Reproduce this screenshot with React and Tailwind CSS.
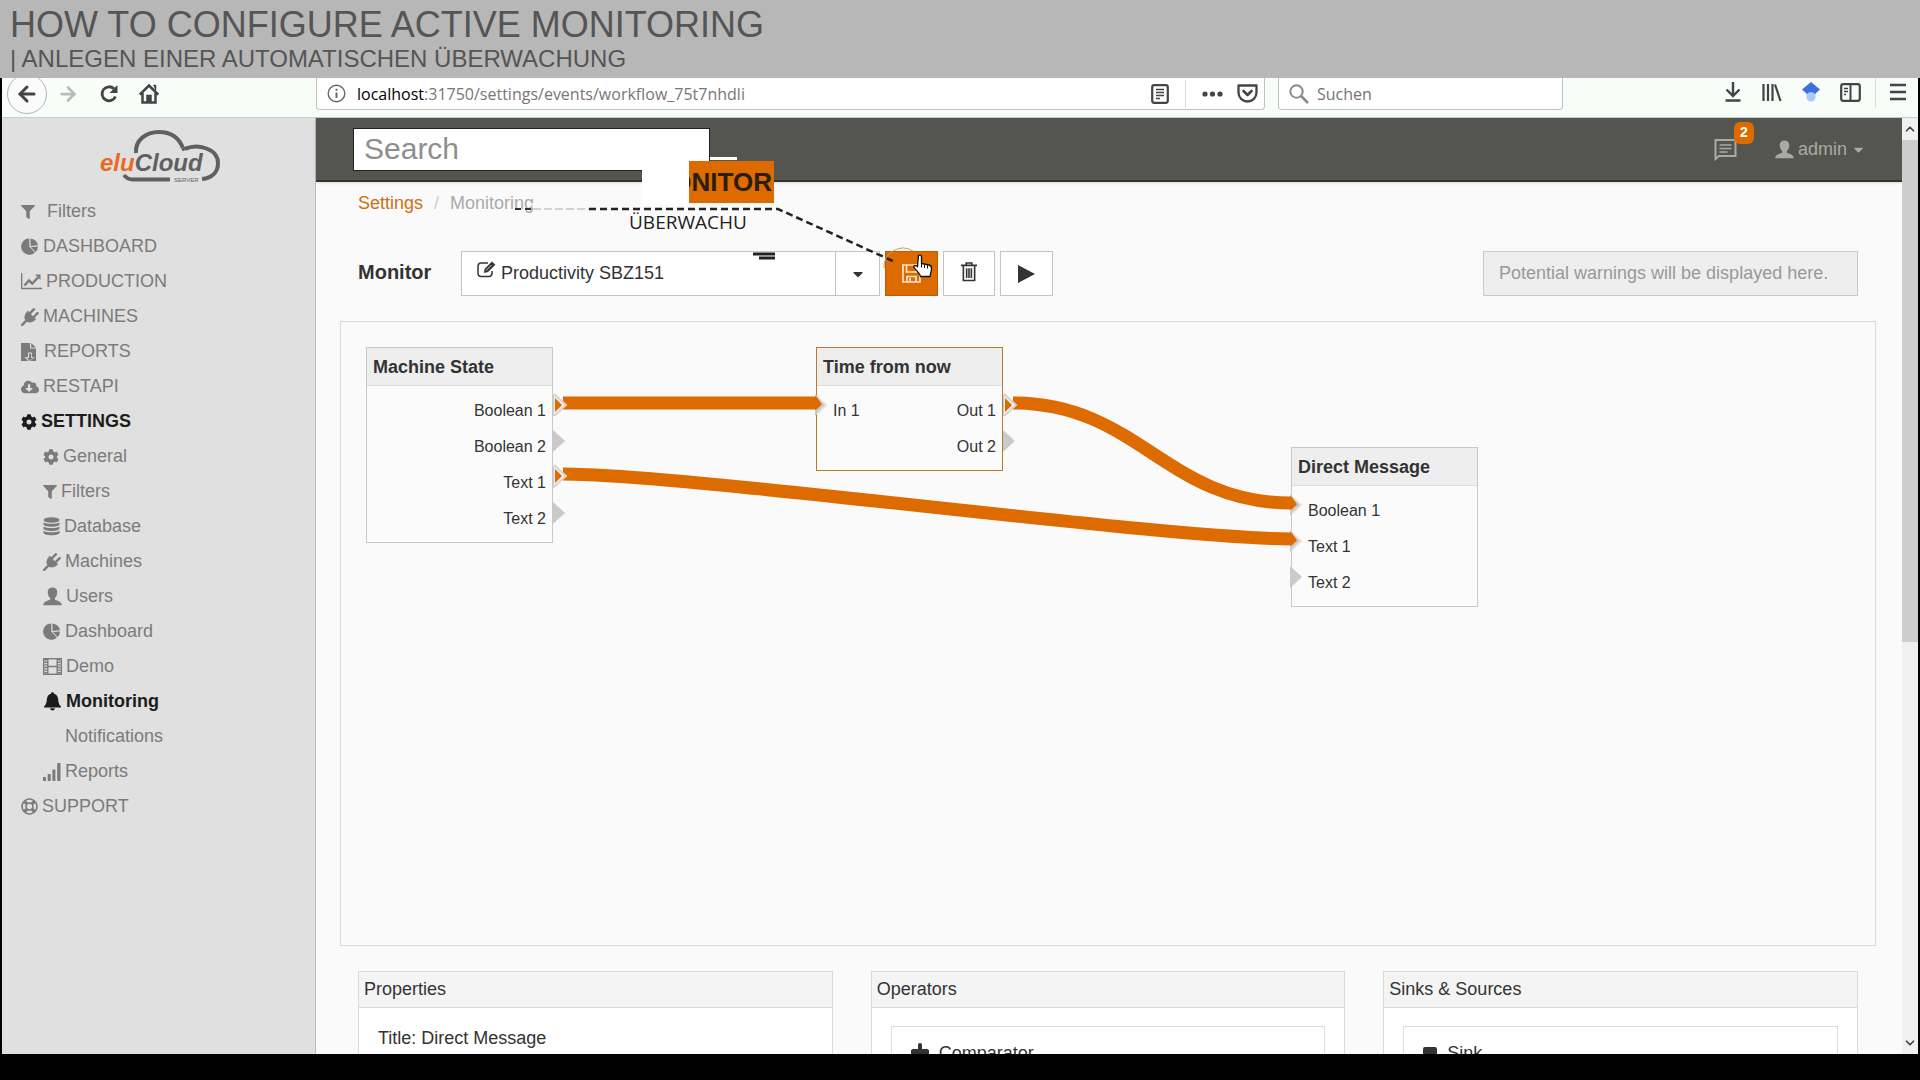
import React from 'react';
import { FaFilter, FaCog, FaRegLifeRing, FaCloudDownloadAlt, FaCaretDown, FaPlay } from 'react-icons/fa';
import { ArrowLeft, ArrowRight, ChevronDown, ChevronUp } from 'lucide-react';

const PieIcon = () => (
  <svg width="18" height="17" viewBox="0 0 18 17" fill="currentColor">
    <path d="M8.3.4v8.2l5.6 6A8.2 8.2 0 1 1 8.3.4z" />
    <path d="M9.5.4a8 8 0 0 1 7.4 6.9L9.5 8zM9.9 9l7.1-.6a7.6 7.6 0 0 1-2.5 5.5z" />
  </svg>
);

const ChartIcon = () => (
  <svg width="21" height="17" viewBox="0 0 21 17" fill="none" stroke="currentColor">
    <path d="M.7 0v15.5H21" strokeWidth="1.3" />
    <path d="M3.5 12.5l4.5-5 3.3 3L17 4.5" strokeWidth="2.4" />
    <path d="M14 1.5h5.5V7z" fill="currentColor" stroke="none" />
  </svg>
);

const PlugIcon = () => (
  <svg width="18" height="18" viewBox="0 0 19 19" fill="none" stroke="currentColor" strokeLinecap="round">
    <path d="M1.2 17.800l5-5M9.500 5.500l4-4M13.500 9.500l4-4" strokeWidth="2.600" />
    <path d="M7.200 3.600l8.200 8.200c-2.700 3-7 4-9.800 1.600C3 11 4 6.500 7.200 3.600z" fill="currentColor" strokeWidth="1" />
  </svg>
);

const ReportIcon = () => (
  <svg width="15" height="18" viewBox="0 0 15 18" fill="currentColor">
    <path d="M0 0h9v5.500h6V18H9.500l4-3.800h-2.700V9.500H7v4.700H3.500L7.500 18H0zM10.200 0L15 4.500h-4.800z" />
    <path d="M8 10.500h2v4.500h2L9 18l-3-3h2z" />
  </svg>
);

const DatabaseIcon = () => (
  <svg width="17" height="19" viewBox="0 0 17 19" fill="currentColor">
    <ellipse cx="8.5" cy="3" rx="8" ry="2.8" />
    <path d="M.5 5.200c3 2 13 2 16 0v2.200c-1 3-15 3-16 0zM.5 9.500c3 2 13 2 16 0v2.200c-1 3-15 3-16 0zM.5 13.800c3 2 13 2 16 0V16c-1 3-15 3-16 0z" />
  </svg>
);

const UserIcon = () => (
  <svg width="19" height="19" viewBox="0 0 19 19" fill="currentColor">
    <path d="M9.500.5c3 0 4.800 1.800 4.800 4.500 0 2.600-1 4.700-2.500 6v1.500c2.500 1.300 7 2.200 7 5.700H.2c0-3.500 4.500-4.400 7-5.700V11C5.700 9.700 4.700 7.600 4.700 5 4.700 2.300 6.500.5 9.500.5z" />
  </svg>
);

const FilmIcon = () => (
  <svg width="19" height="17" viewBox="0 0 19 17" fill="none" stroke="currentColor">
    <rect x=".7" y=".7" width="17.6" height="15.6" strokeWidth="1.4" />
    <path d="M4.800 1v15M14.200 1v15M5 8.500h9" strokeWidth="1.4" />
    <path d="M2.700 1v15M16.300 1v15" strokeWidth="2.6" strokeDasharray="1.4 1.2" />
  </svg>
);

const BellIcon = () => (
  <svg width="19" height="19" viewBox="0 0 19 19" fill="currentColor">
    <path d="M9.500.3c1 0 1.500.7 1.500 1.500 3 .8 4 3 4.200 6 .2 3.300 1 5 2.800 6.700v1H1v-1c1.800-1.700 2.600-3.400 2.800-6.700.2-3 1.200-5.200 4.200-6 0-.8.500-1.500 1.500-1.500zM7.200 16.200h4.600c0 3-4.600 3-4.600 0z" />
  </svg>
);

const SignalIcon = () => (
  <svg width="18" height="18" viewBox="0 0 18 18" fill="currentColor">
    <path d="M0 14h3v4H0zM4.700 11h3v7h-3zM9.400 6.500h3V18h-3zM14.200 0h3.300v18h-3.300z" />
  </svg>
);

const CogIcon = () => <FaCog size={16} />;
const FilterIcon = () => <FaFilter size={14} />;
const CloudIcon = () => <FaCloudDownloadAlt size={18} />;

const RingIcon = () => <FaRegLifeRing size={17} />;

const NAV = [
  { label: 'Filters', icon: FilterIcon, gap: 'gap-3' },
  { label: 'DASHBOARD', icon: PieIcon },
  { label: 'PRODUCTION', icon: ChartIcon },
  { label: 'MACHINES', icon: PlugIcon },
  { label: 'REPORTS', icon: ReportIcon, gap: 'gap-2' },
  { label: 'RESTAPI', icon: CloudIcon },
  { label: 'SETTINGS', icon: CogIcon, active: true },
  { label: 'General', icon: CogIcon, sub: true },
  { label: 'Filters', icon: FilterIcon, sub: true },
  { label: 'Database', icon: DatabaseIcon, sub: true },
  { label: 'Machines', icon: PlugIcon, sub: true },
  { label: 'Users', icon: UserIcon, sub: true },
  { label: 'Dashboard', icon: PieIcon, sub: true },
  { label: 'Demo', icon: FilmIcon, sub: true },
  { label: 'Monitoring', icon: BellIcon, sub: true, active: true },
  { label: 'Notifications', sub: true },
  { label: 'Reports', icon: SignalIcon, sub: true },
  { label: 'SUPPORT', icon: RingIcon },
];

const NavItem = ({ label, icon: Icon, sub, active, gap = 'gap-1' }) => (
  <li>
    <a
      href="#"
      className={`flex h-[35px] items-center ${gap} ${sub ? 'pl-[41px]' : 'pl-[19px]'} ${
        active ? 'font-bold text-[#1c1c1c]' : 'text-[#7b7b7b]'
      }`}
    >
      {Icon ? <Icon /> : <span className="w-[18px]" />}
      {label}
    </a>
  </li>
);

const Logo = () => (
  <svg width="124" height="64" viewBox="0 0 124 64" fill="none" role="img" aria-label="eluCloud Server">
    <path d="M36 31C35 18 46 10 59 10c12 0 20 6 24 16M85 27c13-6 33 0 33 14 0 9-6 15-16 16" stroke="#606060" strokeWidth="4" />
    <path d="M82 28l6-3" stroke="#606060" strokeWidth="3" />
    <path d="M24 53c2 3 5 4.500 9 4.500h37" stroke="#606060" strokeWidth="4" />
    <text x="0" y="49" fontFamily="Liberation Sans, sans-serif" fontSize="24" fontWeight="bold" fontStyle="italic" fill="#606060">
      <tspan fill="#ea6a24">elu</tspan>Cloud
    </text>
    <text x="74" y="60" fontFamily="Liberation Sans, sans-serif" fontSize="6" fill="#606060">SERVER</text>
  </svg>
);

const BrowserBar = () => (
  <div className="flex h-10 shrink-0 items-start border-b border-[#c9cec9] bg-[#f7fdf8] font-['Open_Sans','Noto_Sans',sans-serif] text-[#444]">
    <div className="flex h-full w-[314px] items-start gap-5">
      <button aria-label="Back" className="ml-[5px] -mt-1 flex size-10 shrink-0 items-center justify-center rounded-full border border-[#b5b5b5] bg-[#fbfbfb]">
        <ArrowLeft size={24} strokeWidth={3} />
      </button>
      <div className="-ml-2.5 flex h-8 items-center gap-5">
        <button aria-label="Forward" className="text-[#b9bdb9]"><ArrowRight size={22} strokeWidth={3} /></button>
        <button aria-label="Reload">
          <svg width="20" height="20" viewBox="0 0 20 20" fill="none" stroke="currentColor" strokeWidth="2.8">
            <path d="M16.500 12.500A7 7 0 1 1 15 4.800" />
            <path d="M18.500 1v8h-8z" fill="currentColor" stroke="none" />
          </svg>
        </button>
        <button aria-label="Home">
          <svg width="20" height="20" viewBox="0 0 20 20" fill="none" stroke="currentColor" strokeWidth="2.5">
            <path d="M.8 10.500L10 1.500l9.200 9M3.500 9v9.500h13V9" />
            <path d="M8 18v-6.500h4V18zM14.500 1.500h2V6" fill="currentColor" strokeWidth="1.5" />
          </svg>
        </button>
      </div>
    </div>
    <div className="flex h-8 min-w-0 flex-1 items-center rounded-b-sm border-x border-b border-[#bfc3bf] bg-white px-2.5">
      <svg width="19" height="19" viewBox="0 0 19 19" className="shrink-0" fill="none" stroke="#666">
        <circle cx="9.5" cy="9.5" r="8.3" strokeWidth="1.4" />
        <path d="M9.500 8.500v5.500M9.500 4.800v2" strokeWidth="2" />
      </svg>
      <p className="ml-[11px] flex-1 text-[16px] text-[#777]"><span className="text-black">localhost</span>:31750/settings/events/workflow_75t7nhdli</p>
      <button aria-label="Reader view">
        <svg width="18" height="20" viewBox="0 0 18 20" fill="none" stroke="currentColor">
          <rect x="1.2" y="1.2" width="15.6" height="17.6" rx="2" strokeWidth="2.2" />
          <path d="M5 5.500h8M5 8.500h8M5 11.500h8M5 14.500h4" strokeWidth="1.5" />
        </svg>
      </button>
      <span className="ml-4 h-7 border-l border-[#dadada]" />
      <button aria-label="Page actions" className="ml-4">
        <svg width="21" height="6" viewBox="0 0 21 6" fill="currentColor"><circle cx="3" cy="3" r="2.6" /><circle cx="10.5" cy="3" r="2.6" /><circle cx="18" cy="3" r="2.6" /></svg>
      </button>
      <button aria-label="Save to Pocket" className="ml-3.5 -mr-1">
        <svg width="21" height="19" viewBox="0 0 21 19" fill="none" stroke="currentColor" strokeWidth="2.3" strokeLinecap="round" strokeLinejoin="round">
          <path d="M1.500 1.500h18v7a9 9 0 0 1-18 0z" />
          <path d="M6.500 7l4 4 4-4" strokeWidth="2.6" />
        </svg>
      </button>
    </div>
    <label className="ml-[13px] flex h-8 w-[285px] items-center rounded-b-sm border-x border-b border-[#bfc3bf] bg-white px-2.5">
      <svg width="20" height="20" viewBox="0 0 20 20" fill="none" stroke="#8a8a8a"><circle cx="7.5" cy="7.5" r="6.2" strokeWidth="2" /><path d="M12 12l7 7" strokeWidth="2.6" /></svg>
      <input type="text" placeholder="Suchen" aria-label="Suchen" className="ml-2 min-w-0 flex-1 bg-transparent text-[16px] outline-none placeholder:text-[#737373]" />
    </label>
    <div className="flex h-7 w-[355px] items-center justify-end gap-5 pr-3">
      <button aria-label="Downloads">
        <svg width="18" height="20" viewBox="0 0 18 20" fill="none" stroke="currentColor" strokeWidth="2.4"><path d="M9 0v13M2.500 7.500L9 14l6.500-6.500M1.500 18.500h15" /></svg>
      </button>
      <button aria-label="Library">
        <svg width="20" height="19" viewBox="0 0 20 19" fill="none" stroke="currentColor" strokeWidth="2.2"><path d="M1.500 1v17M6 1v17M10.500 1v17M13 1.500L18.500 18" /></svg>
      </button>
      <button aria-label="Scholar">
        <svg width="18" height="20" viewBox="0 0 18 20"><path d="M4.500 9h9v6a4.500 4.500 0 0 1-9 0z" fill="#a9cbfa" /><path d="M9 0l9 7.500-5 4.500a5 5 0 0 0-8 0L0 7.500z" fill="#3b71d8" /></svg>
      </button>
      <button aria-label="Sidebars">
        <svg width="21" height="19" viewBox="0 0 21 19" fill="none" stroke="currentColor"><rect x="1.2" y="1.2" width="18.6" height="16.6" rx="2" strokeWidth="2.2" /><path d="M10.500 1v17" strokeWidth="2" /><path d="M4 5.500h4M4 8.500h4M4 11.500h2" strokeWidth="1.3" /></svg>
      </button>
      <span className="-mx-1.5 h-8 border-l border-[#dadfda]" />
      <button aria-label="Menu">
        <svg width="16" height="18" viewBox="0 0 16 18" stroke="currentColor" strokeWidth="2.4"><path d="M0 2h16M0 9h16M0 16h16" /></svg>
      </button>
    </div>
  </div>
);

const PageHeader = () => (
  <header className="flex h-16 shrink-0 items-center border-b-2 border-[#333330] bg-[#555550] pl-[37px] pr-[36px] text-[#a9a9a5] shadow">
    <input
      type="text"
      placeholder="Search"
      aria-label="Search"
      className="h-[43px] w-[357px] border border-[#222] bg-white px-2.5 text-[30px] leading-10 outline-none placeholder:text-[#8e8e8e]"
    />
    <button aria-label="Messages" className="relative ml-auto mr-[38px]">
      <svg width="23" height="23" viewBox="0 0 23 23" fill="none" stroke="currentColor" strokeWidth="2">
        <path d="M1.500 21V2h20v16H5z" />
        <path d="M5.500 7h12M5.500 10.500h12M5.500 14h8" strokeWidth="1.6" />
      </svg>
      <span className="absolute -top-4 left-5 flex h-[22px] w-5 items-center justify-center rounded-md bg-[#dd6b00] text-[14px] font-bold text-white">2</span>
    </button>
    <button className="flex items-center gap-1 text-[18px]">
      <UserIcon />
      admin
      <FaCaretDown size={15} />
    </button>
  </header>
);

const Toolbar = () => (
  <div className="flex h-[45px] items-stretch text-[18px] text-[#333]">
    <label htmlFor="monitor" className="w-[103px] text-[20px] font-bold leading-[43px]">Monitor</label>
    <div className="flex w-[375px] items-center border border-[#c4c4c4] bg-white pl-[15px]">
      <svg width="19" height="17" viewBox="0 0 19 17" className="-mt-2 shrink-0" fill="none" stroke="#333">
        <path d="M11 2H4a3 3 0 0 0-3 3v7.500a3 3 0 0 0 3 3h8a3 3 0 0 0 3-3V10" strokeWidth="1.5" />
        <path d="M7.200 11.500l.8-3.800L15 .8l3 3-7 7z" fill="#333" strokeWidth=".6" />
        <path d="M9 9.500l5.500-5.500" stroke="#fff" strokeWidth=".8" />
      </svg>
      <input id="monitor" type="text" defaultValue="Productivity SBZ151" className="ml-[5px] min-w-0 flex-1 bg-transparent outline-none" />
    </div>
    <button aria-label="Choose monitor" className="-ml-px flex w-[45px] items-center justify-center border border-[#c4c4c4] bg-white">
      <FaCaretDown size={16} />
    </button>
    <button aria-label="Save" className="ml-[5px] flex w-[53px] items-center justify-center border border-[#b85c08] bg-[#dd6b00] text-white">
      <svg width="19" height="19" viewBox="0 0 19 19" fill="none" stroke="#ffe9d0" strokeWidth="1.6">
        <path d="M1 1h14l3 3v14H1z" />
        <path d="M4.500 1v7h10V1M5 18v-5.500h9V18M8 14v3" />
      </svg>
    </button>
    <button aria-label="Delete" className="ml-[5px] flex w-[52px] items-center justify-center border border-[#c4c4c4] bg-white pb-1">
      <svg width="16" height="20" viewBox="0 0 17 21" fill="none" stroke="#333" strokeWidth="1.7">
        <path d="M0 3.500h17M5.500 3V1h6v2M2.500 4v15.500h12V4M6 6.500V17M8.500 6.500V17M11 6.500V17" />
      </svg>
    </button>
    <button aria-label="Run" className="ml-[5px] flex w-[53px] items-center justify-center border border-[#c4c4c4] bg-white">
      <svg width="17" height="18" viewBox="0 0 17 18" fill="currentColor"><path d="M0 0l17 9-17 9z" /></svg>
    </button>
    <p className="ml-auto w-[375px] border border-[#c9c9c9] bg-[#eee] px-[15px] leading-[42px] text-[#999]">
      Potential warnings will be displayed here.
    </p>
  </div>
);

/* Positions are relative to the canvas */
const NODES = [
  { title: 'Machine State', place: 'left-[25px] top-[25px]', outputs: [['Boolean 1', true], ['Boolean 2'], ['Text 1', true], ['Text 2']] },
  { title: 'Time from now', place: 'left-[475px] top-[25px]', selected: true, inputs: [['In 1', true]], outputs: [['Out 1', true], ['Out 2']] },
  { title: 'Direct Message', place: 'left-[950px] top-[125px]', inputs: [['Boolean 1', true], ['Text 1', true], ['Text 2']] },
];

const LINKS = [
  { x1: 222, y1: 81, x2: 475, y2: 81 },
  { x1: 672, y1: 81, x2: 950, y2: 181 },
  { x1: 222, y1: 152, x2: 950, y2: 217 },
];

const Arrow = ({ side }) => (
  <svg
    width="12"
    height="24"
    viewBox="0 0 12 24"
    className={`absolute top-0 ${side === 'out' ? '-right-[13px]' : '-left-0.5'}`}
  >
    <path d="M0 1l12 11L0 23z" fill="#cacaca" />
  </svg>
);

const Link = ({ x1, y1, x2, y2 }) => (
  <g>
    <path d={`M${x1} ${y1}C${x1 + 125} ${y1} ${x2 - 125} ${y2} ${x2} ${y2}`} stroke="#dd6b00" strokeWidth="13" />
    <g transform={`translate(${x1} ${y1})`}>
      <path d="M-9 -9L3 2-9 13z" fill="#f5f1ea" />
      <path d="M-9 -9L3 2-9 13" stroke="#d6d4d1" strokeWidth="2" />
      <path d="M-8 -5l7 7-7 7z" fill="#dd6b00" />
    </g>
    <g transform={`translate(${x2} ${y2})`}>
      <path d="M1 -7l9 9-9 9" stroke="#ece6de" strokeWidth="1.5" />
      <path d="M-1 -6.500h1.500l5.500 8-5.500 5h-1.500z" fill="#dd6b00" />
    </g>
  </g>
);

const Node = ({ title, place, selected, inputs = [], outputs = [] }) => (
  <div className={`absolute w-[187px] border bg-[#fbfbfb] ${place} ${selected ? 'border-[#b97a2e]' : 'border-[#c8c8c8]'}`}>
    <h3 className="border-b border-[#ddd] bg-[#eee] pl-1.5 pt-px text-[18px] font-bold leading-9 text-[#333]">{title}</h3>
    <div className="flex justify-between pb-[5px] pt-[7px] text-[16px] leading-9 text-[#333]">
      <ul>
        {inputs.map(([label]) => (
          <li key={label} className="relative pl-4">
            <Arrow side="in" />
            {label}
          </li>
        ))}
      </ul>
      <ul className="text-right">
        {outputs.map(([label]) => (
          <li key={label} className="relative pr-1.5">
            <Arrow side="out" />
            {label}
          </li>
        ))}
      </ul>
    </div>
  </div>
);

const Canvas = () => (
  <section aria-label="Workflow" className="relative h-[625px] border border-[#d9d9d9] bg-[#fafafa]">
    {NODES.map((node) => <Node key={node.title} {...node} />)}
    <svg className="pointer-events-none absolute inset-0 size-full" fill="none">
      {LINKS.map((link) => <Link key={`${link.x1}-${link.y1}`} {...link} />)}
    </svg>
  </section>
);

const Panel = ({ title, children }) => (
  <section className="border border-[#d9d9d9] bg-white text-[18px] text-[#333]">
    <h2 className="border-b border-[#d9d9d9] bg-[#f4f4f4] pl-[5px] leading-[35px]">{title}</h2>
    <div className="h-24 px-[19px] py-[18px]">{children}</div>
  </section>
);

const PanelItem = ({ icon, children }) => (
  <div className="flex h-[54px] items-center gap-2.5 border border-[#ddd] pl-[19px]">
    {icon}
    {children}
  </div>
);

const Callout = () => (
  <div className="pointer-events-none absolute left-[515px] top-[157px] h-36 w-[440px]" aria-hidden="true">
    <svg className="absolute inset-0" width="440" height="144" fill="none">
      <path d="M195 1.500h27" stroke="#fff" strokeWidth="3" />
      <path d="M14 46h62v5H18z" fill="#fafafa" fillOpacity=".8" />
      <path d="M0 52h16" stroke="#333" strokeWidth="2" strokeDasharray="6 4" />
      <path d="M18 52h56" stroke="#aaa" strokeDasharray="8 3" />
      <path d="M74 52h189l117 53" stroke="#222" strokeWidth="2.500" strokeDasharray="7 4" />
    </svg>
    <div className="absolute left-[127px] top-1 h-11 w-12 bg-white" />
    <div className="absolute left-[174px] top-1 flex h-[42px] w-[85px] items-center justify-end overflow-hidden bg-[#dd6b00] pr-0.5 text-[26px] font-bold text-[#2a1d12]">
      ONITOR
    </div>
    <p className="absolute left-[114px] top-[53px] font-['Open_Sans','Noto_Sans',sans-serif] text-[19px] leading-6 text-[#222]">ÜBERWACHU</p>
    <svg className="absolute left-[238px] top-[95px]" width="23" height="8"><path d="M0 2h22M6 6h16" stroke="#222" strokeWidth="3" /></svg>
  </div>
);

const Pointer = () => (
  <svg className="pointer-events-none absolute left-[913px] top-[254px]" width="20" height="24" viewBox="0 0 20 24" aria-hidden="true">
    <path d="M5.500 1.500c1.800-1 3 0 3 1.500v6.500l7.500 1.500c2 .4 2.500 1.500 2.500 3.500 0 3-1 4-1.500 8H7.500C7 19 3 16.500 1 13.500c-.6-1.700 1-2.700 3.500-1z" fill="#fff" stroke="#111" strokeWidth="1.3" />
    <path d="M8.500 9.500v4M11.500 10.500v3.500M14.500 11v3.500" stroke="#111" />
  </svg>
);

const App = () => (
  <div className="flex h-screen flex-col overflow-hidden bg-black font-['Liberation_Sans',Arial,sans-serif]">
    <div className="h-[78px] shrink-0 bg-[#b7b7b7] px-2.5 text-[#555]">
      <h1 className="pt-[5px] text-[36px] leading-10">HOW TO CONFIGURE ACTIVE MONITORING</h1>
      <p className="text-[24px] leading-7">| ANLEGEN EINER AUTOMATISCHEN ÜBERWACHUNG</p>
    </div>

    <div className="mx-0.5 mb-[26px] flex min-h-0 flex-1 flex-col overflow-hidden bg-[#fafafa]">
      <BrowserBar />

      <div className="flex min-h-0 flex-1">
        <nav className="w-[314px] shrink-0 border-r border-[#bbb] bg-[#e0e0e0] text-[18px]">
          <a href="#" className="block h-[76px] pl-[98px] pt-1"><Logo /></a>
          <ul>
            {NAV.map((item) => <NavItem key={`${item.label}-${item.sub}`} {...item} />)}
          </ul>
        </nav>

        <div className="flex min-w-0 flex-1 flex-col">
          <PageHeader />
          <main className="min-h-0 flex-1 overflow-hidden pl-6 pr-[26px] pt-2">
            <div className="px-[18px]">
              <p className="mb-[35px] flex gap-[11px] text-[18px] leading-[26px] text-[#aaa]">
                <a href="#" className="text-[#cf6f12]">Settings</a>
                <span className="text-[#ccc]">/</span>
                <span>Monitoring</span>
              </p>
              <Toolbar />
            </div>
            <div className="my-[25px]">
              <Canvas />
            </div>
            <div className="grid grid-cols-3 gap-[38px] px-[18px]">
              <Panel title="Properties">
                <p className="leading-6">Title: Direct Message</p>
              </Panel>
              <Panel title="Operators">
                <PanelItem
                  icon={(
                    <svg width="18" height="20" viewBox="0 0 18 20" fill="#333">
                      <path d="M7 2a2 2 0 0 1 4 0v4h5a2 2 0 0 1 2 2v12H0V8a2 2 0 0 1 2-2h5z" />
                    </svg>
                  )}
                >
                  Comparator
                </PanelItem>
              </Panel>
              <Panel title="Sinks &amp; Sources">
                <PanelItem
                  icon={<svg width="14" height="12" viewBox="0 0 14 12" fill="#333"><rect width="14" height="12" rx="2" /></svg>}
                >
                  Sink
                </PanelItem>
              </Panel>
            </div>
          </main>
        </div>

        <div className="flex w-4 shrink-0 flex-col items-center bg-[#f0f0f0] text-[#444]" aria-hidden="true">
          <ChevronUp size={14} strokeWidth={3} className="my-1 shrink-0" />
          <div className="h-[502px] w-full bg-[#cdcdcd]" />
          <ChevronDown size={14} strokeWidth={3} className="mb-1 mt-auto shrink-0" />
        </div>
      </div>
    </div>

    <Callout />
    <svg className="pointer-events-none absolute left-[880px] top-[244px]" width="36" height="24" fill="none" aria-hidden="true">
      <path d="M4 24A19 19 0 0 1 33 7" stroke="#d99a5b" />
    </svg>
    <Pointer />
  </div>
);

export default App;
